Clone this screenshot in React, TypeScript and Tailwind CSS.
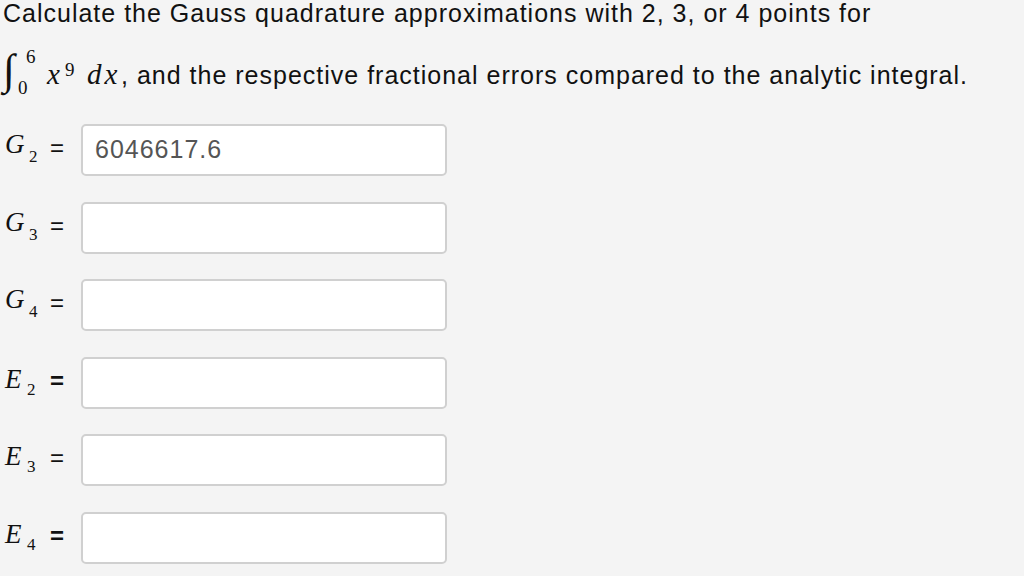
import React from 'react'

const math = { fontFamily: '"Liberation Serif", "DejaVu Serif", serif' }

const rows: { sym: string; sub: string; value: string; bold: boolean }[] = [
  { sym: 'G', sub: '2', value: '6046617.6', bold: false },
  { sym: 'G', sub: '3', value: '', bold: false },
  { sym: 'G', sub: '4', value: '', bold: false },
  { sym: 'E', sub: '2', value: '', bold: true },
  { sym: 'E', sub: '3', value: '', bold: false },
  { sym: 'E', sub: '4', value: '', bold: true }
]

const App = () => {
  return (
    <div
      className="w-[1024px] h-[576px] overflow-hidden bg-[#f4f4f4] text-[#111] pl-[3px] tracking-[1px]"
      style={{ fontFamily: '"Liberation Sans", Arial, sans-serif' }}
    >
      <div className="text-[25px] leading-[26px]">
        Calculate the Gauss quadrature approximations with 2, 3, or 4 points for
      </div>

      {/* integral line */}
      <div className="flex items-start h-[48px] mt-[22px] text-[25px]">
        <span style={math} className="flex items-start tracking-normal">
          <span className="w-[15px] text-[43px] leading-[43px] italic">∫</span>
          <span className="w-[29px] flex flex-col text-[19px] leading-[19px]">
            <span className="pl-[8px] -mt-[1px]">6</span>
            <span className="mt-[12px]">0</span>
          </span>
          <span className="w-[18px] italic text-[29px] leading-[29px] mt-[12px]">x</span>
          <span className="w-[20px] text-[19px] leading-[19px] mt-[12px]">9</span>
          <span className="w-[36px] italic text-[29px] leading-[29px] mt-[12px] pl-[2px] tracking-[3px]">dx</span>
        </span>
        <span className="leading-[25px] mt-[15px]">
          , and the respective fractional errors compared to the analytic integral.
        </span>
      </div>

      <div className="flex flex-col gap-[25.6px] mt-[28px]">
        {rows.map((r) => (
          <div key={r.sym + r.sub} className="flex items-start h-[52px]">
            <div className="w-[78px] h-[52px] flex items-start tracking-normal pl-[2px]">
              <span
                style={math}
                className={
                  'italic text-[27px] leading-[27px] ' +
                  (r.sym === 'E' ? 'w-[22px] mt-[9px]' : 'w-[24px] mt-[7px]')
                }
              >
                {r.sym}
              </span>
              <span
                style={math}
                className={
                  'text-[17px] leading-[17px] mt-[24px] ' + (r.sym === 'E' ? 'w-[23px]' : 'w-[21px]')
                }
              >
                {r.sub}
              </span>
              <span className={'text-[24px] leading-[24px] mt-[12px] ' + (r.bold ? 'font-bold' : '')}>=</span>
            </div>
            <div className="w-[366px] h-[52px] bg-white border-2 border-[#d0d0d0] rounded-[5px] flex items-center pl-[12px] text-[25px] text-[#555]">
              {r.value}
            </div>
          </div>
        ))}
      </div>
    </div>
  )
}

export default App
